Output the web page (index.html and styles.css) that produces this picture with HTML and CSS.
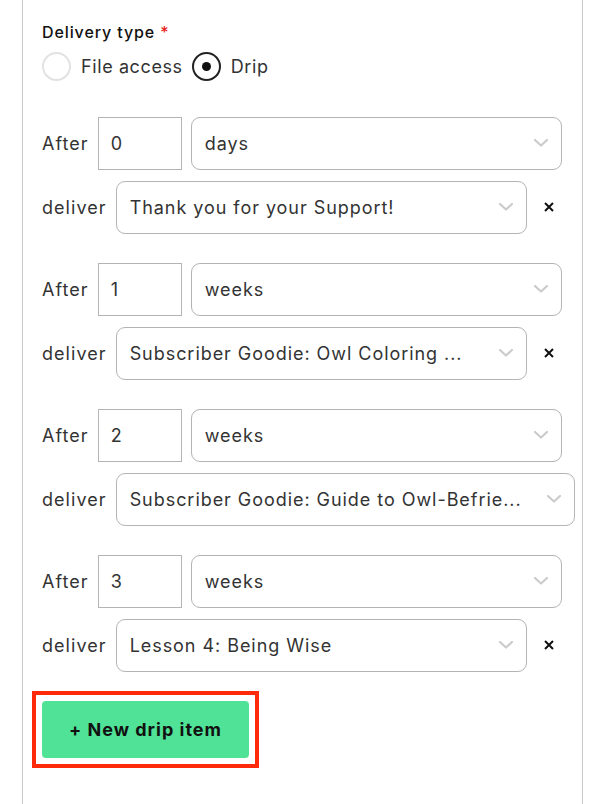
FILE: index.html
```html
<!DOCTYPE html>
<html lang="en">
<head>
<meta charset="utf-8">
<title>Delivery type</title>
<link rel="stylesheet" href="styles.css">
</head>
<body>
<div class="panel">
  <div class="field-label">Delivery type <span class="req">*</span></div>
  <div class="radios">
    <label class="radio"><span class="circle"></span>File access</label>
    <label class="radio"><span class="circle checked"></span>Drip</label>
  </div>

  <div class="groups">
    <div class="group">
      <div class="row">
        <span class="lbl">After</span>
        <div class="num">0</div>
        <div class="select grow"><span class="val">days</span><svg class="chev" viewBox="0 0 14 8"><path d="M1 1l6 5.5L13 1"/></svg></div>
      </div>
      <div class="row">
        <span class="lbl">deliver</span>
        <div class="select grow"><span class="val">Thank you for your Support!</span><svg class="chev" viewBox="0 0 14 8"><path d="M1 1l6 5.5L13 1"/></svg></div>
        <span class="remove"><svg viewBox="0 0 10 10"><path d="M1 1l8 8M9 1l-8 8"/></svg></span>
      </div>
    </div>

    <div class="group">
      <div class="row">
        <span class="lbl">After</span>
        <div class="num">1</div>
        <div class="select grow"><span class="val">weeks</span><svg class="chev" viewBox="0 0 14 8"><path d="M1 1l6 5.5L13 1"/></svg></div>
      </div>
      <div class="row">
        <span class="lbl">deliver</span>
        <div class="select grow"><span class="val">Subscriber Goodie: Owl Coloring ...</span><svg class="chev" viewBox="0 0 14 8"><path d="M1 1l6 5.5L13 1"/></svg></div>
        <span class="remove"><svg viewBox="0 0 10 10"><path d="M1 1l8 8M9 1l-8 8"/></svg></span>
      </div>
    </div>

    <div class="group">
      <div class="row">
        <span class="lbl">After</span>
        <div class="num">2</div>
        <div class="select grow"><span class="val">weeks</span><svg class="chev" viewBox="0 0 14 8"><path d="M1 1l6 5.5L13 1"/></svg></div>
      </div>
      <div class="row">
        <span class="lbl">deliver</span>
        <div class="select grow wide"><span class="val">Subscriber Goodie: Guide to Owl-Befrie...</span><svg class="chev" viewBox="0 0 14 8"><path d="M1 1l6 5.5L13 1"/></svg></div>
      </div>
    </div>

    <div class="group">
      <div class="row">
        <span class="lbl">After</span>
        <div class="num">3</div>
        <div class="select grow"><span class="val">weeks</span><svg class="chev" viewBox="0 0 14 8"><path d="M1 1l6 5.5L13 1"/></svg></div>
      </div>
      <div class="row">
        <span class="lbl">deliver</span>
        <div class="select grow"><span class="val">Lesson 4: Being Wise</span><svg class="chev" viewBox="0 0 14 8"><path d="M1 1l6 5.5L13 1"/></svg></div>
        <span class="remove"><svg viewBox="0 0 10 10"><path d="M1 1l8 8M9 1l-8 8"/></svg></span>
      </div>
    </div>
  </div>

  <div class="highlight">
    <button class="new-btn">+ New drip item</button>
  </div>
</div>
</body>
</html>
```
FILE: styles.css
```css
* { box-sizing: border-box; }
html, body { margin: 0; padding: 0; background: #fff; }
body {
  font-family: "Inter", "Liberation Sans", sans-serif;
  color: #222;
  width: 598px;
  height: 804px;
  overflow: hidden;
}
.panel {
  margin-left: 22px;
  width: 561px;
  height: 804px;
  border-left: 1px solid #c8c8c8;
  border-right: 1px solid #c8c8c8;
  padding: 22px 20px 0 19px;
}
.field-label {
  font-size: 16px;
  font-weight: 500;
  color: #111;
  line-height: 20px;
  letter-spacing: 0.9px;
}
.req { color: #e8231b; }
.radios {
  display: flex;
  gap: 9px;
  margin-top: 10px;
  height: 28px;
  align-items: center;
}
.radio {
  display: flex;
  align-items: center;
  gap: 10px;
  font-size: 18px;
  color: #333;
  letter-spacing: 0.6px;
}
.circle {
  width: 29px;
  height: 29px;
  border-radius: 50%;
  border: 2px solid #e2e2e2;
  display: inline-flex;
  align-items: center;
  justify-content: center;
}
.circle.checked { border-color: #222; }
.circle.checked::after {
  content: "";
  width: 9px;
  height: 9px;
  border-radius: 50%;
  background: #111;
}
.groups {
  margin-top: 37px;
  display: flex;
  flex-direction: column;
  gap: 30px;
}
.group {
  display: flex;
  flex-direction: column;
  gap: 12px;
}
.row {
  display: flex;
  align-items: center;
  height: 52px;
  gap: 9px;
}
.lbl {
  font-size: 18px;
  color: #333;
  letter-spacing: 1.05px;
}
.num {
  width: 84px;
  height: 53px;
  border: 1px solid #b4b4b4;
  display: flex;
  align-items: center;
  padding-left: 12px;
  font-size: 18px;
  color: #333;
}
.select {
  height: 53px;
  border: 1px solid #b4b4b4;
  border-radius: 9px;
  display: flex;
  align-items: center;
  padding: 0 13px 0 13px;
  font-size: 18px;
  color: #333;
  letter-spacing: 0.95px;
}
.grow { flex: 1; min-width: 0; }
.select .val { flex: 1; white-space: nowrap; overflow: hidden; }
.select.wide { margin-right: -13px; }
.chev {
  width: 14px;
  height: 8px;
  fill: none;
  stroke: #cbcbcb;
  stroke-width: 2.2;
  stroke-linecap: round;
  stroke-linejoin: round;
}
.remove {
  width: 26px;
  display: flex;
  justify-content: center;
  align-items: center;
}
.remove svg {
  width: 10px;
  height: 10px;
  fill: none;
  stroke: #111;
  stroke-width: 2;
}
.highlight {
  display: inline-block;
  margin-top: 20px;
  margin-left: -10px;
  border: 4px solid #ff2a0a;
  padding: 6px;
}
.new-btn {
  display: block;
  width: 207px;
  height: 57px;
  background: #50e397;
  border: none;
  border-radius: 4px;
  font-family: inherit;
  font-size: 18px;
  font-weight: 700;
  color: #111;
  letter-spacing: 1px;
}
```
